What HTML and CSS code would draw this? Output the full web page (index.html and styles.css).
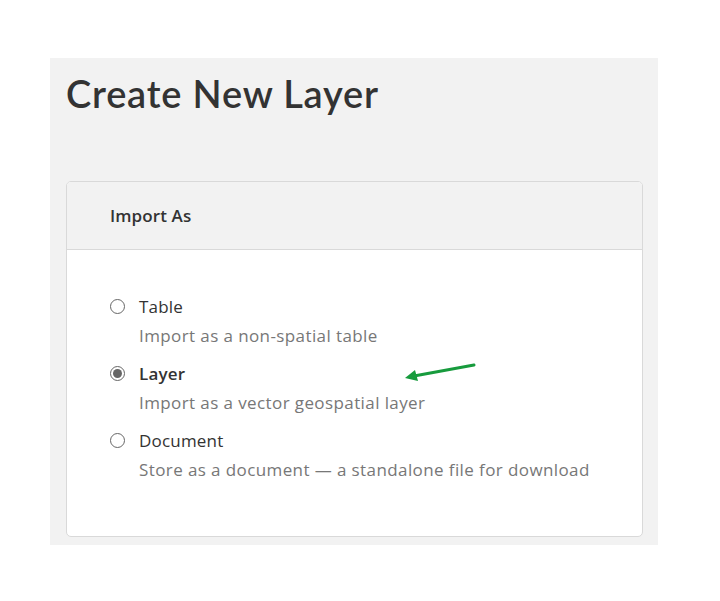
FILE: index.html
```html
<!DOCTYPE html>
<html lang="en">

<head>
    <meta charset="UTF-8">
    <meta name="viewport" content="width=device-width, initial-scale=1.0">
    <title>Create New Layer</title>

    <link rel="stylesheet" href="styles.css">
</head>

<body>
    <div class="panel">
        <h1>Create New Layer</h1>

        <div class="card">
            <div class="card-head">Import As</div>
            <div class="card-body">
                <div class="option">
                    <div class="row">
                        <span class="radio"></span>
                        <span class="label">Table</span>
                    </div>
                    <div class="desc">Import as a non-spatial table</div>
                </div>
                <div class="option checked">
                    <div class="row">
                        <span class="radio"></span>
                        <span class="label">Layer</span>
                    </div>
                    <div class="desc">Import as a vector geospatial layer</div>
                </div>
                <div class="option">
                    <div class="row">
                        <span class="radio"></span>
                        <span class="label">Document</span>
                    </div>
                    <div class="desc">Store as a document — a standalone file for download</div>
                </div>
            </div>
        </div>

        <!-- callout arrow -->
        <svg class="arrow" width="80" height="24" viewBox="0 0 80 24">
            <line x1="74" y1="5" x2="14" y2="16" stroke="#179b3d" stroke-width="3" stroke-linecap="round" />
            <polygon points="5,18 15,10 18,21" fill="#179b3d" />
        </svg>
    </div>
</body>

</html>
```

FILE: styles.css
```css
:root {
    --text: #333333;
    --muted: #777777;
    --line: #d9d9d9;
}

body {
    margin: 0;
    background-color: #fff;
    font-family: "Open Sans", Lato, sans-serif;
    color: var(--text);
}

.panel {
    position: relative;
    box-sizing: border-box;
    margin: 58px 0 0 50px;
    width: 608px;
    height: 487px;
    padding: 12px 15px 0 16px;
    background-color: #f2f2f2;
}

h1 {
    margin: 0 0 65px;
    font-family: Lato, "Open Sans", sans-serif;
    font-size: 38px;
    line-height: 46px;
    font-weight: 600;
    letter-spacing: 0.8px;
    color: var(--text);
}

.card {
    border: 1px solid var(--line);
    border-radius: 5px;
    background-color: #fff;
    overflow: hidden;
}

.card-head {
    height: 67px;
    display: flex;
    align-items: center;
    padding-left: 43px;
    background-color: #f2f2f2;
    border-bottom: 1px solid var(--line);
    font-size: 17px;
    font-weight: 600;
    letter-spacing: 0.1px;
}

.card-body {
    padding: 42px 20px 52px 43px;
    display: flex;
    flex-direction: column;
    gap: 9px;
}

.option .row {
    display: flex;
    align-items: center;
    height: 29px;
}

.radio {
    position: relative;
    box-sizing: border-box;
    width: 15px;
    height: 15px;
    border: 1px solid #666;
    border-radius: 50%;
    margin-right: 14px;
}

.checked .radio::after {
    content: "";
    position: absolute;
    left: 2px;
    top: 2px;
    width: 9px;
    height: 9px;
    border-radius: 50%;
    background-color: #666;
}

.label {
    font-size: 17px;
    line-height: 29px;
    letter-spacing: 0.2px;
}

.checked .label {
    font-weight: 600;
}

.desc {
    margin-left: 29px;
    font-size: 17px;
    line-height: 29px;
    letter-spacing: 0.4px;
    color: var(--muted);
}

.arrow {
    position: absolute;
    left: 350px;
    top: 302px;
}
```
